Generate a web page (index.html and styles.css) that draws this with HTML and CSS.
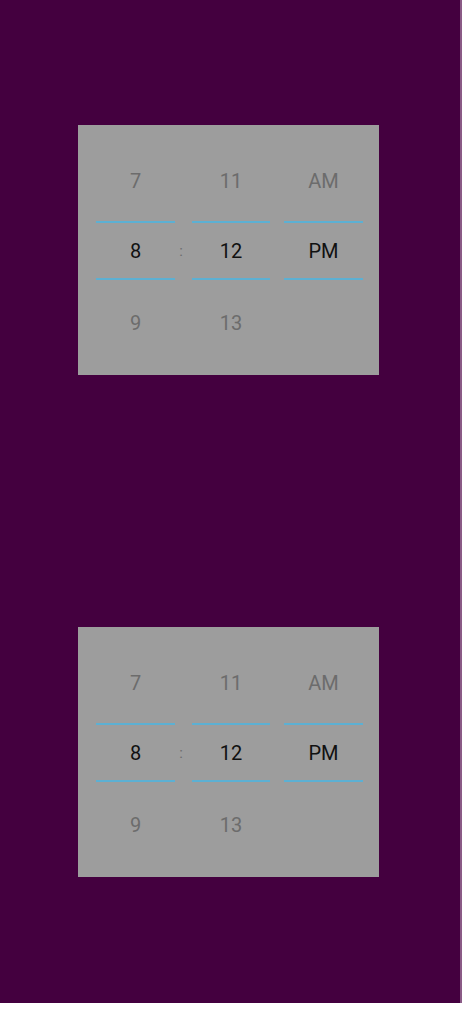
FILE: index.html
```html
<!DOCTYPE html>
<html lang="en">
<head>
    <meta charset="UTF-8">
    <meta name="viewport" content="width=device-width, initial-scale=1.0">
    <title>Time Pickers</title>
    <link rel="stylesheet" href="styles.css">
</head>
<body>
    <div class="screen">
        <div class="picker">
            <div class="wheel">
                <div class="cell dim">7</div>
                <div class="cell current">8</div>
                <div class="cell dim">9</div>
            </div>
            <div class="sep">:</div>
            <div class="wheel">
                <div class="cell dim">11</div>
                <div class="cell current">12</div>
                <div class="cell dim">13</div>
            </div>
            <div class="wheel ampm">
                <div class="cell dim">AM</div>
                <div class="cell current">PM</div>
                <div class="cell dim"></div>
            </div>
        </div>

        <div class="picker">
            <div class="wheel">
                <div class="cell dim">7</div>
                <div class="cell current">8</div>
                <div class="cell dim">9</div>
            </div>
            <div class="sep">:</div>
            <div class="wheel">
                <div class="cell dim">11</div>
                <div class="cell current">12</div>
                <div class="cell dim">13</div>
            </div>
            <div class="wheel ampm">
                <div class="cell dim">AM</div>
                <div class="cell current">PM</div>
                <div class="cell dim"></div>
            </div>
        </div>
    </div>
</body>
</html>
```

FILE: styles.css
```css
body { margin: 0; background: #fff; font-family: Roboto, "Liberation Sans", sans-serif; }
.screen { width: 462px; height: 1003px; background: #44003f; border-right: 2px solid #8a5a86; padding-top: 125px; box-sizing: border-box; }
.picker { display: flex; width: 301px; height: 250px; margin: 0 0 252px 78px; padding: 21px 0 0 18px; box-sizing: border-box; background: #9d9d9d; }
.wheel { display: flex; flex-direction: column; width: 79px; }
.wheel + .sep + .wheel { width: 78px; }
.ampm { margin-left: 14px; }
.sep { width: 12px; margin-right: 5px; padding-top: 95px; line-height: 20px; text-align: center; font-size: 15px; color: #6c6c6c; }
.cell { display: flex; align-items: center; justify-content: center; font-size: 20px; }
.cell.dim { height: 70px; color: #6c6c6c; }
.cell.dim:last-child { margin-top: 3px; }
.cell.current { height: 55px; margin: 5px 0; border-top: 2px solid #5cb0d3; border-bottom: 2px solid #5cb0d3; color: #111; }
```
